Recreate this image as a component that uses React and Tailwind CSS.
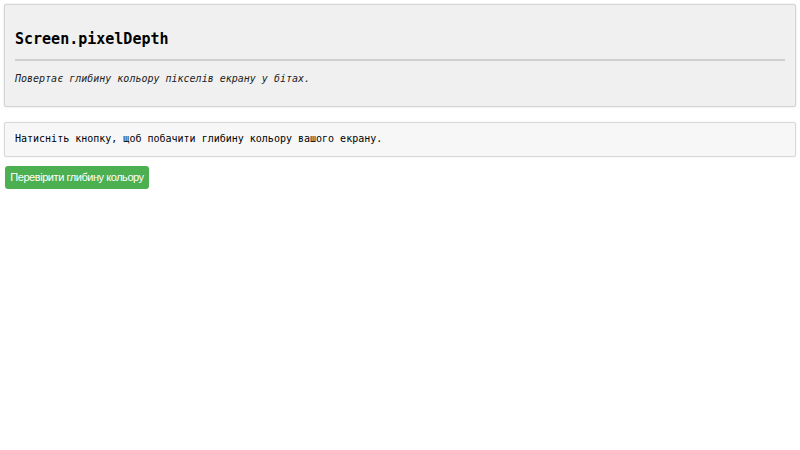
export default function App() {
  const mono = { fontFamily: '"DejaVu Sans Mono", monospace' };
  return (
    <div className="w-[800px] h-[450px] bg-white pt-[4px] px-[4px]" style={mono}>
      <div className="border border-[#d4d4d4] shadow-[0_0_2px_rgba(0,0,0,0.15)] bg-[#f0f0f0] rounded-[2px] px-[10px] pt-[10px] pb-[20px]">
        <h2 className="mt-[14px] text-[15px] leading-[20px] font-bold text-black">Screen.pixelDepth</h2>
        <div className="mt-[10px] border-t-2 border-[#cfcfcf]" />
        <p className="mt-[11px] text-[10px] leading-[14px] italic text-[#222]">Повертає глибину кольору пікселів екрану у бітах.</p>
      </div>
      <div className="mt-[15px] border border-[#d8d8d8] shadow-[0_0_2px_rgba(0,0,0,0.1)] bg-[#f7f7f7] rounded-[2px] px-[10px] pt-[9px] pb-[10px]">
        <p className="text-[10px] leading-[14px] text-black">Натисніть кнопку, щоб побачити глибину кольору вашого екрану.</p>
      </div>
      <button className="mt-[9px] ml-[1px] h-[23px] w-[144px] whitespace-nowrap rounded-[3px] bg-[#4caf50] text-white text-[11px] tracking-[-0.45px] leading-[23px] text-center" style={{ fontFamily: '"Liberation Sans", Arial, sans-serif' }}>
        Перевірити глибину кольору
      </button>
    </div>
  );
}
